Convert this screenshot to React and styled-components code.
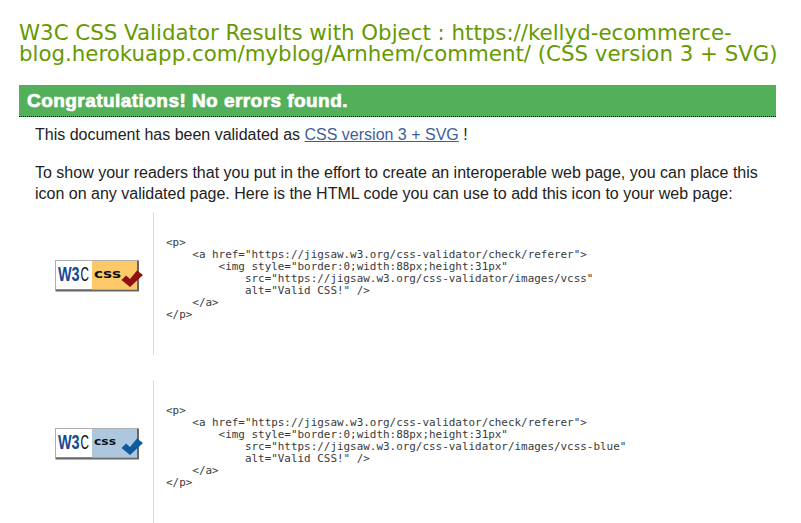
import React from "react";
import styled, { createGlobalStyle } from "styled-components";

const GlobalStyle = createGlobalStyle`
  html, body {
    margin: 0;
    padding: 0;
    background: #fff;
    overflow: hidden;
  }
  body {
    font-family: "Liberation Sans", Arial, sans-serif;
    color: #222;
  }
`;

const Page = styled.div`
  width: 801px;
  height: 523px;
  box-sizing: border-box;
  padding: 22px 25px 0 19px;
  overflow: hidden;
`;

const Title = styled.h2`
  margin: 0 -8px 0 0;
  font: 400 21.33px/21px "DejaVu Sans", Verdana, sans-serif;
  color: #669900;
  height: 63px;
`;

const Banner = styled.h3`
  margin: 0;
  height: 31px;
  padding-left: 8px;
  background: #53af5a;
  border-bottom: 1px dotted #000;
  color: #fff;
  font: 700 19px/31px "Liberation Sans", Arial, sans-serif;
  letter-spacing: 0.45px;
  -webkit-text-stroke: 0.7px #fff;
`;

const Body = styled.div`
  padding-left: 16px;
`;

const Para = styled.p`
  margin: ${p => p.$top}px 0 0;
  font-size: 16px;
  line-height: 21px;
  color: #222;
`;

const DocLink = styled.a`
  color: #3b5f9c;
  text-decoration: underline;
`;

const Samples = styled.div`
  display: flex;
  flex-direction: column;
  gap: 25px;
  margin-top: 8px;
`;

const Sample = styled.div`
  display: flex;
  height: 143px;
`;

const BadgeCell = styled.div`
  width: 134px;
  flex-shrink: 0;
  box-sizing: border-box;
  padding: 48px 0 0 36px;
`;

const CodeCell = styled.pre`
  margin: 0;
  flex: 1;
  border-left: 1px solid #dcdcdc;
  padding: 25px 0 0 12px;
  font: 400 10.93px/12px "DejaVu Sans Mono", Consolas, monospace;
  color: #3a3a3a;
`;

const Badge = ({ fill, check, strong }) => (
  <svg width="88" height="32" viewBox="0 0 88 32" style={{ display: "block" }}>
    <rect x="0.5" y="0.5" width="82" height="29" fill="#fff" stroke="#b0b0b0" />
    <path d="M83 0.5V30.5H0.5" fill="none" stroke="#666" strokeWidth="2" />
    <rect x="37" y="1" width="45" height="28.5" fill={fill} />
    <text
      transform="translate(3 21) scale(0.74 1)"
      fontFamily="'Liberation Sans', sans-serif"
      fontSize="19.5"
      fontWeight="700"
      fill="#174a94"
    >
      W3
    </text>
    <text
      transform="translate(25.5 21) scale(0.6 1)"
      fontFamily="'Liberation Sans', sans-serif"
      fontSize="19.5"
      fill="#111"
    >
      C
    </text>
    <text
      x="39"
      y={strong ? 18 : 17}
      fontFamily="'DejaVu Sans', sans-serif"
      fontSize={strong ? 12 : 11}
      fontWeight="700"
      fill="#111"
      textLength={strong ? 27 : 22}
      lengthAdjust="spacingAndGlyphs"
    >
      css
    </text>
    <path d="M66.5 20L71 15.5L75 19L82 10.5L88 15L75 27Z" fill={check} />
  </svg>
);

const sampleCode = file => `<p>
    <a href="https://jigsaw.w3.org/css-validator/check/referer">
        <img style="border:0;width:88px;height:31px"
            src="https://jigsaw.w3.org/css-validator/images/${file}"
            alt="Valid CSS!" />
    </a>
</p>`;

export default function App() {
  return (
    <Page>
      <GlobalStyle />
      <Title>
        W3C CSS Validator Results with Object : https://kellyd-ecommerce-blog.herokuapp.com/myblog/Arnhem/comment/ (CSS version 3 + SVG)
      </Title>
      <Banner>Congratulations! No errors found.</Banner>
      <Body>
        <Para $top={7}>
          This document has been validated as <DocLink href="#">CSS version 3 + SVG</DocLink> !
        </Para>
        <Para $top={17}>
          To show your readers that you put in the effort to create an interoperable web page, you can place this icon on any validated page. Here is the HTML code you can use to add this icon to your web page:
        </Para>
      </Body>
      <Samples>
        <Sample>
          <BadgeCell>
            <Badge fill="#fdc968" check="#8e1010" strong />
          </BadgeCell>
          <CodeCell>{sampleCode("vcss")}</CodeCell>
        </Sample>
        <Sample>
          <BadgeCell>
            <Badge fill="#adc8de" check="#0f5a9c" />
          </BadgeCell>
          <CodeCell>{sampleCode("vcss-blue")}</CodeCell>
        </Sample>
      </Samples>
    </Page>
  );
}
